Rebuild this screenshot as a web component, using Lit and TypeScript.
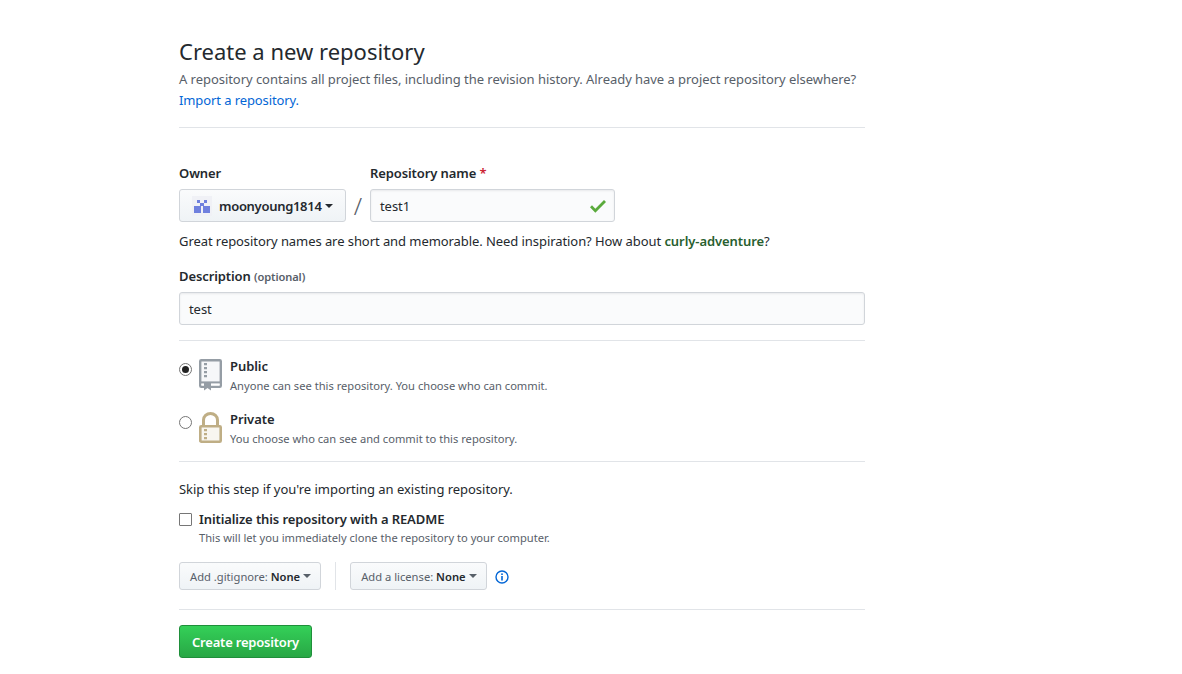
import { LitElement, html, css } from "lit";
import { customElement } from "lit/decorators.js";

@customElement("app-root")
export class AppRoot extends LitElement {
  static styles = css`
    :host { display: block; height: 674px; background: #fff; font-family: "Noto Sans", "Open Sans", sans-serif; font-size: 13px; letter-spacing: -0.07px; color: #24292e; overflow: hidden; }
    .page { width: 686px; margin-left: 179px; padding-top: 35px; }
    * { box-sizing: border-box; }
    h1 { margin: 0; font-size: 22px; font-weight: 400; line-height: 32px; height: 32px; letter-spacing: 0; }
    .lead { margin: 2px 0 0; color: #586069; line-height: 21px; height: 42px; white-space: nowrap; letter-spacing: -0.045px; }
    .lead a { color: #0366d6; letter-spacing: -0.1px; }
    a { text-decoration: none; }
    hr { border: 0; border-top: 1px solid #e1e4e8; margin: 0; height: 1px; }
    hr.top { margin-top: 16px; }
    .owner-row { display: flex; margin-top: 35px; align-items: flex-start; }
    .lbl { font-weight: 600; line-height: 20px; height: 20px; margin-bottom: 6px; letter-spacing: -0.1px; }
    .req { color: #cb2431; }
    .owner-btn { display: flex; align-items: center; width: 167px; height: 33px; border: 1px solid #d1d5da; border-radius: 3px; background: linear-gradient(#fafbfc, #eff3f6); font-weight: 600; padding-left: 12px; letter-spacing: -0.3px; }
    .owner-btn svg { margin-right: 7px; flex: none; }
    .caret { display: inline-block; width: 0; height: 0; border: 4px solid transparent; border-top-color: currentColor; border-bottom: 0; margin-left: 3px; }
    .slash { width: 24px; text-align: center; font-size: 24px; line-height: 33px; color: #586069; font-weight: 300; margin-top: 26px; }
    .input { display: flex; align-items: center; justify-content: space-between; height: 33px; border: 1px solid #d1d5da; border-radius: 3px; background: #fafbfc; padding: 0 8px 0 9px; box-shadow: inset 0 1px 2px rgba(27,31,35,.075); }
    .name { width: 245px; }
    .hint { margin: 9px 0 0; line-height: 21px; height: 21px; }
    .hint b { color: #28602f; font-weight: 600; }
    .desc-label { margin-top: 14px; }
    .opt { font-size: 11.1px; font-weight: 600; color: #586069; }
    hr.a { margin-top: 15px; }
    .radio { display: flex; align-items: flex-start; }
    .rb { width: 13px; height: 13px; border-radius: 50%; border: 1px solid #767676; margin-top: 6px; margin-right: 7px; flex: none; background: #fff; display: flex; align-items: center; justify-content: center; }
    .rb.on::after { content: ""; width: 7px; height: 7px; border-radius: 50%; background: #222; }
    .ic { width: 24px; height: 32px; margin: 2px 7px 0 0; flex: none; }
    .rt { line-height: 19px; font-weight: 600; }
    .note { font-size: 11.15px; color: #586069; line-height: 19px; font-weight: 400; letter-spacing: 0; }
    .r1 { margin-top: 16px; }
    .r2 { margin-top: 15px; }
    hr.b { margin-top: 13px; }
    .skip { margin: 17px 0 0; line-height: 20px; letter-spacing: -0.03px; }
    .check { display: flex; margin-top: 11px; }
    .check .rt { line-height: 18px; letter-spacing: -0.1px; }
    .cb { width: 13px; height: 13px; border: 1px solid #767676; border-radius: 1px; margin: 3px 7px 0 0; flex: none; }
    .btns { display: flex; align-items: center; margin-top: 15px; }
    .sm { display: flex; align-items: center; height: 28px; border: 1px solid #d1d5da; border-radius: 3px; background: linear-gradient(#fafbfc, #eff3f6); font-size: 11.2px; color: #586069; padding: 0 9px 0 10px; white-space: pre; letter-spacing: 0; }
    .sm b { color: #24292e; font-weight: 600; }
    .sep { width: 1px; height: 28px; background: #e1e4e8; margin: 0 14px; }
    .info { margin: 2px 0 0 8px; }
    hr.c { margin-top: 19px; }
    .create { display: flex; align-items: center; justify-content: center; margin-top: 15px; width: 133px; height: 33px; border: 1px solid #1f8f3a; border-radius: 3px; background: linear-gradient(#34d058, #28a745); color: #fff; font-weight: 600; letter-spacing: -0.2px; }
  `;

  render() {
    return html`<div class="page">
      <h1>Create a new repository</h1>
      <p class="lead">A repository contains all project files, including the revision history. Already have a project repository elsewhere?<br><a href="#">Import a repository.</a></p>
      <hr class="top">
      <div class="owner-row">
        <div>
          <div class="lbl">Owner</div>
          <div class="owner-btn">
            <svg width="20" height="20" viewBox="0 0 20 20"><rect width="20" height="20" fill="#f0f1f6"/><g fill="#6f80de"><rect x="2" y="10" width="7" height="7"/><rect x="11" y="10" width="7" height="7"/><rect x="5" y="4" width="3" height="3"/><rect x="12" y="4" width="3" height="3"/><rect x="8" y="7" width="4" height="3"/></g></svg>
            moonyoung1814<span class="caret"></span>
          </div>
        </div>
        <div class="slash">/</div>
        <div>
          <div class="lbl">Repository name <span class="req">*</span></div>
          <div class="input name">test1
            <svg width="16" height="22" viewBox="0 0 12 16"><path fill="#5aaa3c" fill-rule="evenodd" d="M12 5l-8 8-4-4 1.5-1.5L4 10l6.5-6.5L12 5z"/></svg>
          </div>
        </div>
      </div>
      <p class="hint">Great repository names are short and memorable. Need inspiration? How about <b>curly-adventure</b>?</p>
      <div class="lbl desc-label">Description <span class="opt">(optional)</span></div>
      <div class="input">test</div>
      <hr class="a">
      <div class="radio r1">
        <span class="rb on"></span>
        <svg class="ic" viewBox="0 0 24 32">
          <rect x="1.2" y="1.2" width="20.6" height="26.6" rx="1" fill="#f6f7f9" stroke="#959da5" stroke-width="2.4"/>
          <rect x="2.4" y="24.4" width="18.2" height="2.2" fill="#fff"/>
          <path d="M1 23.4h21" stroke="#959da5" stroke-width="2" fill="none"/>
          <path fill="#959da5" d="M5 24h7v7.5l-3.5-2.5L5 31.5zM5 4h3v2.2H5zM5 8h3v2.2H5zM5 12h3v2.2H5zM5 16h3v2.2H5z"/>
        </svg>
        <div><div class="rt">Public</div><div class="note">Anyone can see this repository. You choose who can commit.</div></div>
      </div>
      <div class="radio r2">
        <span class="rb"></span>
        <svg class="ic" viewBox="0 0 24 32">
          <path d="M4.5 14V8a7 6.5 0 0 1 14 0v6" fill="none" stroke="#bfae85" stroke-width="3"/>
          <rect x="1.3" y="14.3" width="20.4" height="15.4" rx="1" fill="#f8f6f0" stroke="#bfae85" stroke-width="2.6"/>
          <path fill="#bfae85" d="M5 17h3v2.2H5zM5 21h3v2.2H5zM5 25h3v2.2H5z"/>
        </svg>
        <div><div class="rt">Private</div><div class="note">You choose who can see and commit to this repository.</div></div>
      </div>
      <hr class="b">
      <p class="skip">Skip this step if you're importing an existing repository.</p>
      <div class="check">
        <span class="cb"></span>
        <div><div class="rt">Initialize this repository with a README</div><div class="note">This will let you immediately clone the repository to your computer.</div></div>
      </div>
      <div class="btns">
        <div class="sm">Add .gitignore: <b>None</b><span class="caret"></span></div>
        <span class="sep"></span>
        <div class="sm">Add a license: <b>None</b><span class="caret"></span></div>
        <svg class="info" width="14" height="14" viewBox="0 0 14 14"><circle cx="7" cy="7" r="6" fill="none" stroke="#0366d6" stroke-width="1.4"/><rect x="6.2" y="6" width="1.6" height="4.5" fill="#0366d6"/><rect x="6.2" y="3.4" width="1.6" height="1.6" fill="#0366d6"/></svg>
      </div>
      <hr class="c">
      <div class="create">Create repository</div>
    </div>`;
  }
}
